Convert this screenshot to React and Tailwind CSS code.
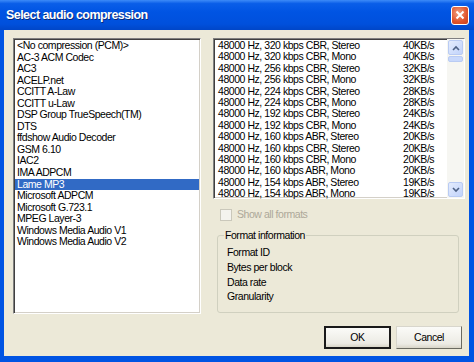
import React from "react";

const left = [
  "<No compression (PCM)>",
  "AC-3 ACM Codec",
  "AC3",
  "ACELP.net",
  "CCITT A-Law",
  "CCITT u-Law",
  "DSP Group TrueSpeech(TM)",
  "DTS",
  "ffdshow Audio Decoder",
  "GSM 6.10",
  "IAC2",
  "IMA ADPCM",
  "Lame MP3",
  "Microsoft ADPCM",
  "Microsoft G.723.1",
  "MPEG Layer-3",
  "Windows Media Audio V1",
  "Windows Media Audio V2",
];

const right = [
  ["48000 Hz, 320 kbps CBR, Stereo", "40KB/s"],
  ["48000 Hz, 320 kbps CBR, Mono", "40KB/s"],
  ["48000 Hz, 256 kbps CBR, Stereo", "32KB/s"],
  ["48000 Hz, 256 kbps CBR, Mono", "32KB/s"],
  ["48000 Hz, 224 kbps CBR, Stereo", "28KB/s"],
  ["48000 Hz, 224 kbps CBR, Mono", "28KB/s"],
  ["48000 Hz, 192 kbps CBR, Stereo", "24KB/s"],
  ["48000 Hz, 192 kbps CBR, Mono", "24KB/s"],
  ["48000 Hz, 160 kbps ABR, Stereo", "20KB/s"],
  ["48000 Hz, 160 kbps CBR, Stereo", "20KB/s"],
  ["48000 Hz, 160 kbps CBR, Mono", "20KB/s"],
  ["48000 Hz, 160 kbps ABR, Mono", "20KB/s"],
  ["48000 Hz, 154 kbps ABR, Stereo", "19KB/s"],
  ["48000 Hz, 154 kbps ABR, Mono", "19KB/s"],
];

const sunken =
  "border border-t-[#808080] border-l-[#808080] border-r-white border-b-white shadow-[inset_1px_1px_0_#404040,inset_-1px_-1px_0_#d4d0c8]";

function ScrollBtn({ up }) {
  return (
    <div className="w-[15px] h-[15px] rounded-[2px] border border-[#b9cbf3] bg-[linear-gradient(135deg,#e4ecfd,#c1d3fb)] flex items-center justify-center">
      <svg width="8" height="6" viewBox="0 0 8 6">
        <path
          d={up ? "M1 5 L4 2 L7 5" : "M1 1 L4 4 L7 1"}
          fill="none"
          stroke="#4d6185"
          strokeWidth="1.6"
        />
      </svg>
    </div>
  );
}

export default function App() {
  return (
    <div
      className="w-[474px] h-[362px] flex flex-col bg-[#0054e3] overflow-hidden"
      style={{ fontFamily: '"Liberation Sans", Arial, sans-serif' }}
    >
      {/* Title bar */}
      <div className="h-[30px] shrink-0 flex items-center justify-between pl-[6px] pr-[5px] bg-[linear-gradient(180deg,#3d8bf8_0%,#0a5ee8_12%,#0054e3_40%,#0050dc_80%,#0046c8_100%)]">
        <span className="text-white font-bold text-[12.5px] tracking-[-0.55px] [text-shadow:1px_1px_0_#0a2a7a]">
          Select audio compression
        </span>
        <div className="w-[18px] h-[19px] rounded-[3px] border border-white bg-[radial-gradient(circle_at_40%_35%,#f0a080,#e0542c_60%,#c8401c)] flex items-center justify-center">
          <svg width="10" height="10" viewBox="0 0 10 10">
            <path d="M1.5 1.5 L8.5 8.5 M8.5 1.5 L1.5 8.5" stroke="white" strokeWidth="2" />
          </svg>
        </div>
      </div>

      {/* Client */}
      <div className="flex-1 flex pl-[4px] pr-[5px] pb-[6px]">
        <div className="flex-1 bg-[#ece9d8] flex pt-[8px] pl-[9px] text-[10.5px] tracking-[-0.45px] text-black">
          {/* Left list */}
          <div className={`w-[188px] h-[276px] bg-white ${sunken} pt-[1px] px-[1px]`}>
            {left.map((t) => (
              <div
                key={t}
                className={`h-[11.55px] leading-[11.55px] pl-[2px] whitespace-nowrap ${
                  t === "Lame MP3" ? "bg-[#316ac5] text-white" : ""
                }`}
              >
                {t}
              </div>
            ))}
          </div>

          {/* Right column */}
          <div className="ml-[12px] flex flex-col">
            <div className={`w-[252px] h-[161px] bg-white ${sunken} flex`}>
              <div className="flex-1 pt-[1px] pl-[4px]">
                {right.map(([a, b]) => (
                  <div key={a} className="h-[11.4px] leading-[11.4px] flex whitespace-nowrap">
                    <span className="w-[185px]">{a}</span>
                    <span>{b}</span>
                  </div>
                ))}
              </div>
              <div className="w-[17px] bg-[#f6f6f2] flex flex-col items-center pt-[1px] pb-[1px]">
                <ScrollBtn up />
                <div className="w-[15px] h-[6px] mt-[1px] rounded-[2px] border border-[#b9cbf3] bg-[#c8d8fb]" />
                <div className="flex-1" />
                <ScrollBtn />
              </div>
            </div>

            {/* checkbox */}
            <div className="flex items-center mt-[9px] ml-[7px] h-[13px]">
              <div className="w-[12px] h-[12px] border border-[#cac8bb] bg-[#f4f3ee]" />
              <span className="ml-[5px] text-[#aca899]">Show all formats</span>
            </div>

            {/* group box */}
            <div className="relative ml-[4px] mt-[14px] w-[242px] h-[78px] border border-[#d0d0bf] rounded-[3px]">
              <span className="absolute -top-[7px] left-[6px] px-[1px] bg-[#ece9d8] leading-[13px]">
                Format information
              </span>
              <div className="pt-[9px] pl-[9px] flex flex-col">
                <div className="h-[14.8px] leading-[14.8px]">Format ID</div>
                <div className="h-[14.8px] leading-[14.8px]">Bytes per block</div>
                <div className="h-[14.8px] leading-[14.8px]">Data rate</div>
                <div className="h-[14.8px] leading-[14.8px]">Granularity</div>
              </div>
            </div>

            {/* buttons */}
            <div className="flex justify-end gap-[5px] mt-[13px] pr-[3px]">
              <div className="w-[67px] h-[23px] border-2 border-[#1a1a1a] bg-[linear-gradient(180deg,#fbfbf8,#ecebe4_80%,#d8d5c8)] flex items-center justify-center">
                OK
              </div>
              <div className="w-[66px] h-[23px] border border-[#6a6a60] border-t-[#d8d6cc] border-l-[#d8d6cc] bg-[linear-gradient(180deg,#fbfbf8,#ecebe4_80%,#d8d5c8)] flex items-center justify-center">
                Cancel
              </div>
            </div>
          </div>
        </div>
      </div>
    </div>
  );
}
